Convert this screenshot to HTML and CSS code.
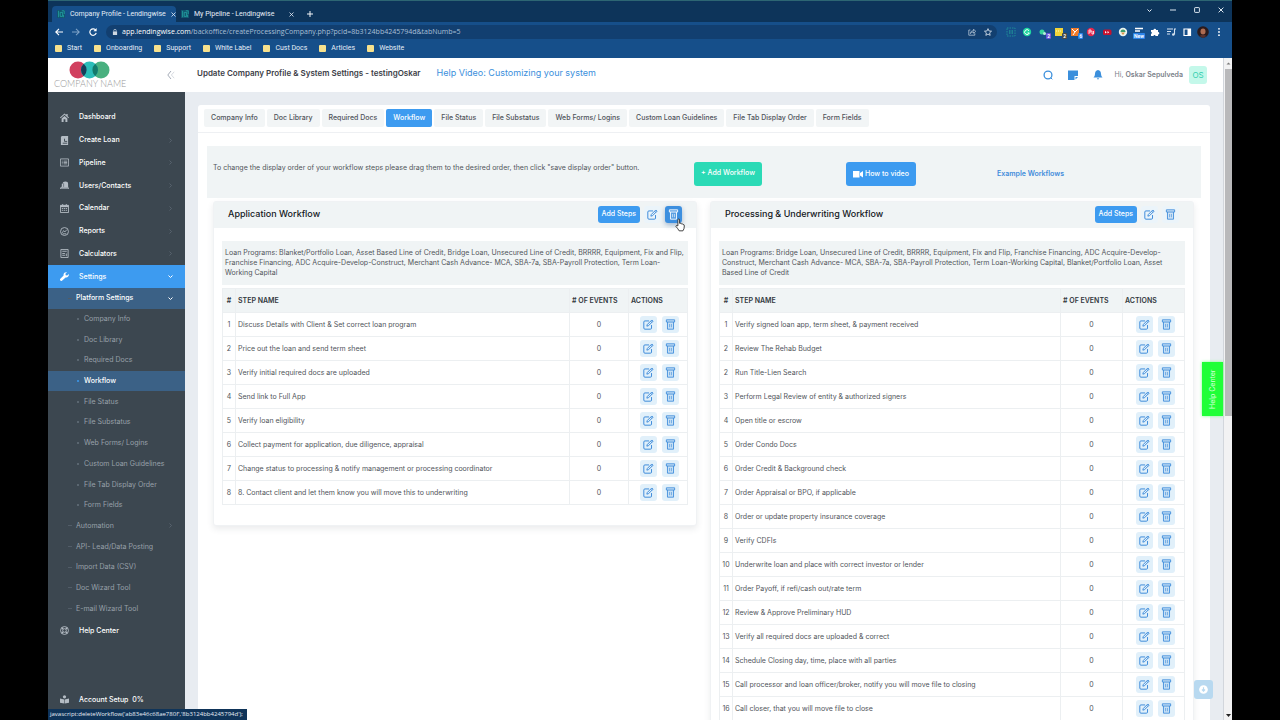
FILE: index.html
```html
<!DOCTYPE html>
<html lang="en">
<head>
<meta charset="utf-8">
<title>Company Profile - Lendingwise</title>
<link rel="stylesheet" href="styles.css">
</head>
<body>
<svg class="defs" aria-hidden="true">
  <symbol id="edit" viewBox="0 0 20 20"><path d="M11 3.5H3.5a2 2 0 0 0-2 2v11a2 2 0 0 0 2 2h10a2 2 0 0 0 2-2V11M16 1.800 18.200 4 10 12.200l-3 .8.8-3zM14 4l2 2" fill="none" stroke="currentColor" stroke-width="1.800"/></symbol>
  <symbol id="trash" viewBox="0 0 20 20"><path d="M2.500 5.500v-4h15v4zM4.500 5.500v13h11v-13" fill="currentColor" fill-opacity=".15" stroke="currentColor" stroke-width="1.600"/><path d="M8.300 9v6M11.700 9v6" stroke="currentColor" stroke-width="1.600" opacity=".7"/></symbol>
  <symbol id="right" viewBox="0 0 10 10"><path d="M3 1l4 4-4 4" fill="none" stroke="currentColor" stroke-width="1.500"/></symbol>
  <symbol id="down" viewBox="0 0 10 10"><path d="M1 3l4 4 4-4" fill="none" stroke="currentColor" stroke-width="2"/></symbol>
  <symbol id="close" viewBox="0 0 10 10"><path d="M1 1l8 8M9 1L1 9" fill="none" stroke="currentColor" stroke-width="1.600"/></symbol>
  <symbol id="favicon" viewBox="0 0 10 10"><path d="M0 0h10v10H0z" fill="#12556f"/><path d="M2 1v8M4 3h3v5H4zM6 1h3v4M8 6v3" fill="none" stroke="#23a6a4"/></symbol>
</svg>

<div class="browser">
  <div class="tabstrip">
    <div class="btab btab-active"><svg class="i8"><use href="#favicon"/></svg><span>Company Profile - Lendingwise</span><button class="plain" aria-label="Close tab"><svg class="i5"><use href="#close"/></svg></button></div>
    <div class="btab"><svg class="i8"><use href="#favicon"/></svg><span>My Pipeline - Lendingwise</span><button class="plain" aria-label="Close tab"><svg class="i5"><use href="#close"/></svg></button></div>
    <button class="plain newtab" aria-label="New tab"><svg class="i6" viewBox="0 0 10 10"><path d="M5 0v10M0 5h10" stroke="#fff" stroke-width="1.600"/></svg></button>
    <div class="winctl">
      <button class="plain" aria-label="Search tabs"><svg class="i5"><use href="#down"/></svg></button>
      <button class="plain" aria-label="Minimize"><svg class="i6" viewBox="0 0 10 10"><path d="M0 5h10" stroke="currentColor" stroke-width="1.600"/></svg></button>
      <button class="plain" aria-label="Maximize"><svg class="i6" viewBox="0 0 10 10"><rect x="1" y="1" width="8" height="8" rx="1" fill="none" stroke="currentColor" stroke-width="1.600"/></svg></button>
      <button class="plain" aria-label="Close window"><svg class="i6"><use href="#close"/></svg></button>
    </div>
  </div>
  <div class="toolbar">
    <button class="plain" aria-label="Back"><svg class="i8" viewBox="0 0 10 10"><path d="M10 5H1M5 1L1 5l4 4" fill="none" stroke="#fff" stroke-width="1.400"/></svg></button>
    <button class="plain" aria-label="Forward"><svg class="i8" viewBox="0 0 10 10"><path d="M0 5h9M5 1l4 4-4 4" fill="none" stroke="#7fa3c8" stroke-width="1.300"/></svg></button>
    <button class="plain" aria-label="Reload"><svg class="i8" viewBox="0 0 10 10"><path d="M8.500 3A4 4 0 1 0 9 6" fill="none" stroke="#fff" stroke-width="1.500"/><path d="M9.500 0v4h-4z" fill="#fff"/></svg></button>
    <div class="omnibox">
      <svg class="i6" viewBox="0 0 10 10"><path d="M1.500 4h7v6h-7z" fill="#cfd8e2"/><path d="M3 4V2.500a2 2 0 0 1 4 0V4" fill="none" stroke="#cfd8e2" stroke-width="1.200"/></svg>
      <span class="url"><b>app.lendingwise.com</b>/backoffice/createProcessingCompany.php?pcId=8b3124bb4245794d&amp;tabNumb=5</span>
      <svg class="i8" viewBox="0 0 10 10"><path d="M3 2.500H1V9h7.500V6.500M3 7c0-2.500 1.500-3.500 4-3.500V1.500L9.700 4.200 7 6.500v-1.500C5.500 5 4 5.500 3 7z" fill="none" stroke="#c4d2e0" stroke-width=".9"/></svg>
      <svg class="i8" viewBox="0 0 10 10"><path d="M5 .8l1.200 2.900 3.200.3-2.400 2.100.7 3.100L5 7.600 2.300 9.200 3 6.100.6 4l3.200-.3z" fill="none" stroke="#e2eaf2"/></svg>
    </div>
    <div class="exts">
      <svg class="i10" viewBox="0 0 10 10"><rect x="1" y="1" width="8" height="8" fill="none" stroke="#1f8b96" stroke-dasharray="1.500 1"/><path d="M3.500 3v4M5 3v4M6.500 3v4" stroke="#1f8b96" stroke-width=".8"/></svg>
      <svg class="i10" viewBox="0 0 10 10"><circle cx="5" cy="5" r="4.200" fill="#1fd6a0"/><path d="M7 3.700A2.400 2.400 0 1 0 7.300 6H5.500" fill="none" stroke="#fff"/></svg>
      <span class="ext"><svg class="i10" viewBox="0 0 10 10"><circle cx="4" cy="5" r="2.500" fill="#38d39b"/><circle cx="6.500" cy="6.500" r="1.500" fill="#b8efd8"/></svg><i class="bdg violet">2</i></span>
      <span class="ext"><svg class="i10" viewBox="0 0 10 10"><path d="M1 1h8v8H1z" fill="#f1d438"/><path d="M2 4h6" stroke="#fff8c8" stroke-dasharray="1 1"/></svg><i class="bdg dark">2</i></span>
      <span class="ext"><svg class="i10" viewBox="0 0 10 10"><path d="M1 1h8v8H1z" fill="#f07c2c"/><path d="M2 2l3 3 3-3M5 5L3 8" fill="none" stroke="#fff"/></svg><i class="bdg sky">6</i></span>
      <svg class="i10" viewBox="0 0 10 10"><circle cx="5" cy="5" r="4.200" fill="#e3264d"/><path d="M3 7V3h2v2H3M6 4v3h1.500V4" fill="none" stroke="#fff" stroke-width=".8"/></svg>
      <svg class="i10" viewBox="0 0 10 10"><rect x="1" y="2.500" width="8.500" height="5.500" rx="1.500" fill="#c5122f"/><path d="M3 4l1.700 1.200L3 6.500zM5.500 4l1.700 1.200-1.700 1.300z" fill="#fff"/></svg>
      <svg class="i10" viewBox="0 0 10 10"><circle cx="5" cy="5" r="4.200" fill="#e9f2ef"/><path d="M2.500 5a2.500 2.500 0 0 1 5 0z" fill="#3d9d6c"/><path d="M3 5.500h4L5 8z" fill="#dd9340"/></svg>
      <span class="ext"><svg class="i10" viewBox="0 0 10 10"><path d="M1 1.500h8M1 4h5" stroke="#fff" stroke-width="1.500"/></svg><i class="bdg sky wide">New</i></span>
      <svg class="i10" viewBox="0 0 10 10"><path d="M1 3h2.500a1.300 1.300 0 1 1 2.600 0H8v2a1.300 1.300 0 1 1 0 2.600V9H5.500a1 1 0 0 0-2 0H1V7a1.200 1.200 0 0 0 0-2.300z" fill="#fff"/></svg>
      <svg class="i10" viewBox="0 0 10 10"><path d="M1 2h6M1 4.500h4M1 7h3M8.500 2v5.500M8 2h2" stroke="#d5e2ef" stroke-width="1.100"/><circle cx="7.300" cy="7.500" r="1.300" fill="#d5e2ef"/></svg>
      <svg class="i10" viewBox="0 0 10 10"><path d="M2 2h6.500v6.500H2z" fill="none" stroke="#fff" stroke-width="1.200"/><path d="M5.500 2h3v6.500h-3z" fill="#fff"/></svg>
      <svg class="i12" viewBox="0 0 12 12"><circle cx="6" cy="6" r="5.800" fill="#2a1a1c"/><ellipse cx="6" cy="5.500" rx="2.500" ry="3" fill="#ae6c52"/><path d="M2.500 10q3.500-3 7 0l-3.500 2z" fill="#54302f"/></svg>
      <svg class="i10" viewBox="0 0 10 10"><circle cx="5" cy="1.800" r=".9" fill="#fff"/><circle cx="5" cy="5" r=".9" fill="#fff"/><circle cx="5" cy="8.200" r=".9" fill="#fff"/></svg>
    </div>
  </div>
  <div class="bookmarks">
    <a href="#">Start</a><a href="#">Onboarding</a><a href="#">Support</a><a href="#">White Label</a><a href="#">Cust Docs</a><a href="#">Articles</a><a href="#">Website</a>
  </div>
</div>

<div class="app">
  <aside class="side">
    <div class="brand">
      <div class="logo">
        <svg class="circles" viewBox="0 0 42 18"><circle cx="9" cy="9" r="8.500" fill="#d1405f"/><circle cx="32" cy="9" r="8.500" fill="#49b07f"/><circle cx="20.500" cy="9" r="8.500" fill="#2cbdb9"/><path d="M14.800 2.700a8.500 8.500 0 0 1 0 12.600 8.500 8.500 0 0 1 0-12.600z" fill="#173f5a"/><path d="M26.200 2.700a8.500 8.500 0 0 1 0 12.600 8.500 8.500 0 0 1 0-12.600z" fill="#147a6b"/></svg>
        <span>COMPANY NAME</span>
      </div>
      <button class="plain" aria-label="Collapse menu"><svg class="i8" viewBox="0 0 10 10"><path d="M5 0L1 5l4 5" fill="none" stroke="#8d95a5"/><path d="M9 1L5.500 5 9 9" fill="none" stroke="#ccd0d8"/></svg></button>
    </div>
    <nav class="menu">
      <div class="top">
        <a href="#"><svg class="i9" viewBox="0 0 10 10"><path d="M0 5l5-4.500 2 1.800V1h1.500v2.500L10 5l-.7.800L5 2 .7 5.800zM1.800 6L5 3.200 8.200 6v4H6V7H4v3H1.800z" fill="currentColor"/></svg><span>Dashboard</span></a>
        <a href="#"><svg class="i9" viewBox="0 0 10 10"><path d="M2 0h7v10H1V1z" fill="currentColor"/><path d="M5 3v3h3M3 8h5" fill="none" stroke="#3c4750"/></svg><span>Create Loan</span><svg class="i5 arr"><use href="#right"/></svg></a>
        <a href="#"><svg class="i9" viewBox="0 0 10 10"><path d="M.5 1h9v8h-9zM2 3.500h1M4 3.500h4M2 5h1M4 5h4M2 6.500h1M4 6.500h4" fill="none" stroke="currentColor" stroke-width=".9"/></svg><span>Pipeline</span><svg class="i5 arr"><use href="#right"/></svg></a>
        <a href="#"><svg class="i9" viewBox="0 0 10 10"><path d="M3 3q0-2.500 3-2.500T9 3v3l1 3H0q0-2 2-3V3z" fill="currentColor"/><path d="M4 2.500v4M1 8h8" stroke="#3c4750" stroke-width=".6"/></svg><span>Users/Contacts</span><svg class="i5 arr"><use href="#right"/></svg></a>
        <a href="#"><svg class="i9" viewBox="0 0 10 10"><path d="M.5 1.500h9v8h-9z" fill="none" stroke="currentColor"/><path d="M.5 2.500h9M2 5h6M2 7h6M3 0v2M7 0v2" stroke="currentColor" stroke-dasharray="1.500 .7"/><path d="M.5 2.500h9" stroke="currentColor" stroke-width="2"/></svg><span>Calendar</span><svg class="i5 arr"><use href="#right"/></svg></a>
        <a href="#"><svg class="i9" viewBox="0 0 10 10"><circle cx="5" cy="5" r="4.400" fill="none" stroke="currentColor"/><path d="M2.500 6.500L4 4l1.500 1.500L7.500 3M3 7.500h4" fill="none" stroke="currentColor" stroke-width=".9"/></svg><span>Reports</span><svg class="i5 arr"><use href="#right"/></svg></a>
        <a href="#"><svg class="i9" viewBox="0 0 10 10"><path d="M1 .5h8v9H1zM2.500 2.500h5M2.500 5h3M2.500 7h3M7 5v3" fill="none" stroke="currentColor"/></svg><span>Calculators</span><svg class="i5 arr"><use href="#right"/></svg></a>
        <a href="#" class="current"><svg class="i9" viewBox="0 0 10 10"><path d="M9.700 2.200L8 4 6.300 3.700 6 2 7.800.3A3 3 0 0 0 4 3.800L.4 7.400a1.400 1.400 0 0 0 2.100 2.100L6.200 6a3 3 0 0 0 3.500-3.800z" fill="currentColor"/></svg><span>Settings</span><svg class="i5 arr"><use href="#down"/></svg></a>
      </div>
      <div class="sub">
        <a href="#" class="l2 on"><span>Platform Settings</span><svg class="i5 arr"><use href="#down"/></svg></a>
        <a href="#" class="l3">Company Info</a>
        <a href="#" class="l3">Doc Library</a>
        <a href="#" class="l3">Required Docs</a>
        <a href="#" class="l3 on">Workflow</a>
        <a href="#" class="l3">File Status</a>
        <a href="#" class="l3">File Substatus</a>
        <a href="#" class="l3">Web Forms/ Logins</a>
        <a href="#" class="l3">Custom Loan Guidelines</a>
        <a href="#" class="l3">File Tab Display Order</a>
        <a href="#" class="l3">Form Fields</a>
        <a href="#" class="l2"><span>Automation</span><svg class="i5 arr"><use href="#right"/></svg></a>
        <a href="#" class="l2">API- Lead/Data Posting</a>
        <a href="#" class="l2">Import Data (CSV)</a>
        <a href="#" class="l2">Doc Wizard Tool</a>
        <a href="#" class="l2">E-mail Wizard Tool</a>
      </div>
      <a href="#" class="single"><svg class="i9" viewBox="0 0 10 10"><circle cx="5" cy="5" r="4.400" fill="none" stroke="currentColor"/><circle cx="5" cy="5" r="2" fill="none" stroke="currentColor"/><path d="M2 2l1.500 1.500M8 2L6.500 3.500M2 8l1.500-1.500M8 8L6.500 6.500" stroke="currentColor" stroke-width="1.400"/></svg><span>Help Center</span></a>
      <a href="#" class="single last"><svg class="i9" viewBox="0 0 10 10"><circle cx="5" cy="2" r="1.800" fill="currentColor"/><path d="M0 4l4.700 1v4.500L0 8.500zM10 4L5.300 5v4.500l4.700-1z" fill="currentColor"/></svg><span>Account Setup&nbsp; 0%</span></a>
    </nav>
  </aside>

  <div class="page">
    <header class="head">
      <h1>Update Company Profile &amp; System Settings - testingOskar</h1>
      <a href="#" class="helpvid">Help Video: Customizing your system</a>
      <div class="user">
        <button class="plain" aria-label="Search"><svg class="i10" viewBox="0 0 10 10"><circle cx="5" cy="5" r="3.900" fill="none" stroke="currentColor" stroke-width="1.300"/><path d="M7.700 7.700L9.300 9.300" stroke="currentColor"/></svg></button>
        <button class="plain" aria-label="Notes"><svg class="i10" viewBox="0 0 10 10"><path d="M0 .5h10V6H6.500v4H0z" fill="currentColor"/><path d="M7.500 7H10L7.500 9.500z" fill="currentColor"/></svg></button>
        <button class="plain" aria-label="Notifications"><svg class="i10" viewBox="0 0 10 10"><path d="M5 0q3 .5 3 4 0 2 1.500 3.500h-9Q2 6 2 4 2 .5 5 0zM3.800 8.200h2.400L5 9.700z" fill="currentColor"/></svg></button>
        <span class="hi">Hi, <b>Oskar Sepulveda</b></span>
        <span class="avatar">OS</span>
      </div>
    </header>

    <main class="main">
      <div class="card">
        <nav class="tabs">
          <a href="#">Company Info</a><a href="#">Doc Library</a><a href="#">Required Docs</a><a href="#" class="sel">Workflow</a><a href="#">File Status</a><a href="#">File Substatus</a><a href="#">Web Forms/ Logins</a><a href="#">Custom Loan Guidelines</a><a href="#">File Tab Display Order</a><a href="#">Form Fields</a>
        </nav>
        <div class="content">
          <div class="notice">
            <p>To change the display order of your workflow steps please drag them to the desired order, then click "save display order" button.</p>
            <div><button class="btn green">+ Add Workflow</button></div>
            <div><button class="btn blue big"><svg class="i10" viewBox="0 0 10 10"><path d="M0 2h6.500v6.500H0zM7 4l3-2v6.500L7 6.500z" fill="#fff"/></svg>How to video</button></div>
            <a href="#">Example Workflows</a>
          </div>
          <div class="panels">
            <section class="panel">
              <div class="phead">
                <h2>Application Workflow</h2>
                <button class="btn blue">Add Steps</button>
                <button class="act" aria-label="Edit workflow"><svg><use href="#edit"/></svg></button>
                <button class="act hover" aria-label="Delete workflow"><svg><use href="#trash"/></svg><svg class="cursor" viewBox="0 0 12 16"><path d="M3.500 9V2q0-1.200 1-1.200t1 1.200v4q2-.5 2.500.7 1.500-.4 1.800.8 1.500-.2 1.400 1.500 0 4-1.700 6H5Q3.500 12.500 1 9.500q0-1.500 2.500-.5z" fill="#fff" stroke="#222"/></svg></button>
              </div>
              <div class="pbody">
                <p class="programs">Loan Programs: Blanket/Portfolio Loan, Asset Based Line of Credit, Bridge Loan, Unsecured Line of Credit, BRRRR, Equipment, Fix and Flip, Franchise Financing, ADC Acquire-Develop-Construct, Merchant Cash Advance- MCA, SBA-7a, SBA-Payroll Protection, Term Loan-Working Capital</p>
                <table>
                  <thead><tr><th class="n">#</th><th>STEP NAME</th><th class="e"># OF EVENTS</th><th class="a">ACTIONS</th></tr></thead>
                  <tbody>
                  <tr><td>1</td><td>Discuss Details with Client &amp; Set correct loan program</td><td>0</td><td><button class="act" aria-label="Edit"><svg><use href="#edit"/></svg></button><button class="act" aria-label="Delete"><svg><use href="#trash"/></svg></button></td></tr>
                  <tr><td>2</td><td>Price out the loan and send term sheet</td><td>0</td><td><button class="act" aria-label="Edit"><svg><use href="#edit"/></svg></button><button class="act" aria-label="Delete"><svg><use href="#trash"/></svg></button></td></tr>
                  <tr><td>3</td><td>Verify initial required docs are uploaded</td><td>0</td><td><button class="act" aria-label="Edit"><svg><use href="#edit"/></svg></button><button class="act" aria-label="Delete"><svg><use href="#trash"/></svg></button></td></tr>
                  <tr><td>4</td><td>Send link to Full App</td><td>0</td><td><button class="act" aria-label="Edit"><svg><use href="#edit"/></svg></button><button class="act" aria-label="Delete"><svg><use href="#trash"/></svg></button></td></tr>
                  <tr><td>5</td><td>Verify loan eligibility</td><td>0</td><td><button class="act" aria-label="Edit"><svg><use href="#edit"/></svg></button><button class="act" aria-label="Delete"><svg><use href="#trash"/></svg></button></td></tr>
                  <tr><td>6</td><td>Collect payment for application, due diligence, appraisal</td><td>0</td><td><button class="act" aria-label="Edit"><svg><use href="#edit"/></svg></button><button class="act" aria-label="Delete"><svg><use href="#trash"/></svg></button></td></tr>
                  <tr><td>7</td><td>Change status to processing &amp; notify management or processing coordinator</td><td>0</td><td><button class="act" aria-label="Edit"><svg><use href="#edit"/></svg></button><button class="act" aria-label="Delete"><svg><use href="#trash"/></svg></button></td></tr>
                  <tr><td>8</td><td>8. Contact client and let them know you will move this to underwriting</td><td>0</td><td><button class="act" aria-label="Edit"><svg><use href="#edit"/></svg></button><button class="act" aria-label="Delete"><svg><use href="#trash"/></svg></button></td></tr>
                  </tbody>
                </table>
              </div>
            </section>
            <section class="panel roomy">
              <div class="phead">
                <h2>Processing &amp; Underwriting Workflow</h2>
                <button class="btn blue">Add Steps</button>
                <button class="act" aria-label="Edit workflow"><svg><use href="#edit"/></svg></button>
                <button class="act" aria-label="Delete workflow"><svg><use href="#trash"/></svg></button>
              </div>
              <div class="pbody">
                <p class="programs">Loan Programs: Bridge Loan, Unsecured Line of Credit, BRRRR, Equipment, Fix and Flip, Franchise Financing, ADC Acquire-Develop-Construct, Merchant Cash Advance- MCA, SBA-7a, SBA-Payroll Protection, Term Loan-Working Capital, Blanket/Portfolio Loan, Asset Based Line of Credit</p>
                <table>
                  <thead><tr><th class="n">#</th><th>STEP NAME</th><th class="e"># OF EVENTS</th><th class="a">ACTIONS</th></tr></thead>
                  <tbody>
                  <tr><td>1</td><td>Verify signed loan app, term sheet, &amp; payment received</td><td>0</td><td><button class="act" aria-label="Edit"><svg><use href="#edit"/></svg></button><button class="act" aria-label="Delete"><svg><use href="#trash"/></svg></button></td></tr>
                  <tr><td>2</td><td>Review The Rehab Budget</td><td>0</td><td><button class="act" aria-label="Edit"><svg><use href="#edit"/></svg></button><button class="act" aria-label="Delete"><svg><use href="#trash"/></svg></button></td></tr>
                  <tr><td>2</td><td>Run Title-Lien Search</td><td>0</td><td><button class="act" aria-label="Edit"><svg><use href="#edit"/></svg></button><button class="act" aria-label="Delete"><svg><use href="#trash"/></svg></button></td></tr>
                  <tr><td>3</td><td>Perform Legal Review of entity &amp; authorized signers</td><td>0</td><td><button class="act" aria-label="Edit"><svg><use href="#edit"/></svg></button><button class="act" aria-label="Delete"><svg><use href="#trash"/></svg></button></td></tr>
                  <tr><td>4</td><td>Open title or escrow</td><td>0</td><td><button class="act" aria-label="Edit"><svg><use href="#edit"/></svg></button><button class="act" aria-label="Delete"><svg><use href="#trash"/></svg></button></td></tr>
                  <tr><td>5</td><td>Order Condo Docs</td><td>0</td><td><button class="act" aria-label="Edit"><svg><use href="#edit"/></svg></button><button class="act" aria-label="Delete"><svg><use href="#trash"/></svg></button></td></tr>
                  <tr><td>6</td><td>Order Credit &amp; Background check</td><td>0</td><td><button class="act" aria-label="Edit"><svg><use href="#edit"/></svg></button><button class="act" aria-label="Delete"><svg><use href="#trash"/></svg></button></td></tr>
                  <tr><td>7</td><td>Order Appraisal or BPO, if applicable</td><td>0</td><td><button class="act" aria-label="Edit"><svg><use href="#edit"/></svg></button><button class="act" aria-label="Delete"><svg><use href="#trash"/></svg></button></td></tr>
                  <tr><td>8</td><td>Order or update property insurance coverage</td><td>0</td><td><button class="act" aria-label="Edit"><svg><use href="#edit"/></svg></button><button class="act" aria-label="Delete"><svg><use href="#trash"/></svg></button></td></tr>
                  <tr><td>9</td><td>Verify CDFIs</td><td>0</td><td><button class="act" aria-label="Edit"><svg><use href="#edit"/></svg></button><button class="act" aria-label="Delete"><svg><use href="#trash"/></svg></button></td></tr>
                  <tr><td>10</td><td>Underwrite loan and place with correct investor or lender</td><td>0</td><td><button class="act" aria-label="Edit"><svg><use href="#edit"/></svg></button><button class="act" aria-label="Delete"><svg><use href="#trash"/></svg></button></td></tr>
                  <tr><td>11</td><td>Order Payoff, if refi/cash out/rate term</td><td>0</td><td><button class="act" aria-label="Edit"><svg><use href="#edit"/></svg></button><button class="act" aria-label="Delete"><svg><use href="#trash"/></svg></button></td></tr>
                  <tr><td>12</td><td>Review &amp; Approve Preliminary HUD</td><td>0</td><td><button class="act" aria-label="Edit"><svg><use href="#edit"/></svg></button><button class="act" aria-label="Delete"><svg><use href="#trash"/></svg></button></td></tr>
                  <tr><td>13</td><td>Verify all required docs are uploaded &amp; correct</td><td>0</td><td><button class="act" aria-label="Edit"><svg><use href="#edit"/></svg></button><button class="act" aria-label="Delete"><svg><use href="#trash"/></svg></button></td></tr>
                  <tr><td>14</td><td>Schedule Closing day, time, place with all parties</td><td>0</td><td><button class="act" aria-label="Edit"><svg><use href="#edit"/></svg></button><button class="act" aria-label="Delete"><svg><use href="#trash"/></svg></button></td></tr>
                  <tr><td>15</td><td>Call processor and loan officer/broker, notify you will move file to closing</td><td>0</td><td><button class="act" aria-label="Edit"><svg><use href="#edit"/></svg></button><button class="act" aria-label="Delete"><svg><use href="#trash"/></svg></button></td></tr>
                  <tr><td>16</td><td>Call closer, that you will move file to close</td><td>0</td><td><button class="act" aria-label="Edit"><svg><use href="#edit"/></svg></button><button class="act" aria-label="Delete"><svg><use href="#trash"/></svg></button></td></tr>
                  </tbody>
                </table>
              </div>
            </section>
          </div>
        </div>
      </div>
    </main>
  </div>
  <div class="scroll">
    <svg class="i5" viewBox="0 0 10 10"><path d="M1 7l4-4 4 4z" fill="#777"/></svg>
    <div class="thumb"></div>
    <svg class="i5" viewBox="0 0 10 10"><path d="M0 2h10L5 8z" fill="#222"/></svg>
  </div>
  <button class="helptab">Help Center</button>
  <button class="jump" aria-label="Scroll down"><svg class="i9" viewBox="0 0 10 10"><circle cx="5" cy="5" r="4.800" fill="#fff"/><path d="M5 2.500v4M3.300 5L5 6.800 6.700 5" fill="none" stroke="#b8d9f0" stroke-width="1.300"/></svg></button>
  <div class="status">javascript:deleteWorkflow('ab83e46c68ae780f','8b3124bb4245794d');</div>
</div>
</body>
</html>
```

FILE: styles.css
```css
* { box-sizing: border-box; }
body {
  margin: 0;
  padding: 0 48px;
  height: 100vh;
  overflow: hidden;
  background: #000;
  display: flex;
  flex-direction: column;
  font: 7px/10px Inter, "Open Sans", sans-serif;
  color: #50545a;
}
a { color: inherit; text-decoration: none; }
button { font: inherit; border: 0; cursor: pointer; }
h1, h2, p { margin: 0; font-weight: 400; }
svg { display: block; flex: none; }
.defs { position: absolute; width: 0; height: 0; }
.plain { padding: 0; background: none; color: inherit; }
.i5 { width: 5px; height: 5px; }
.i6 { width: 6px; height: 6px; }
.i8 { width: 8px; height: 8px; }
.i9 { width: 9px; height: 9px; }
.i10 { width: 10px; height: 10px; }
.i12 { width: 12px; height: 12px; }

/* Browser chrome */
.browser { flex: none; background: #164f8a; color: #e6eef7; font-family: Roboto, sans-serif; }
.tabstrip { display: flex; align-items: center; height: 22px; padding: 5px 8px 0 4px; background: #0d345a; border-top: 1px solid #2d6673; }
.btab { display: flex; align-items: center; gap: 5px; width: 124px; height: 17px; padding: 0 6px 0 5px; border-radius: 4px 4px 0 0; }
.btab span { flex: 1; white-space: nowrap; }
.btab-active { background: #164f8a; }
.newtab { margin-left: 7px; }
.winctl { display: flex; gap: 18px; margin: 0 0 8px auto; }
.toolbar { display: flex; align-items: center; gap: 9px; height: 19px; padding: 0 6px 0 7px; }
.omnibox { flex: 1; display: flex; align-items: center; gap: 8px; height: 14px; padding: 0 5px 0 6px; border-radius: 7px; background: #123f70; color: #a9bfd6; }
.omnibox .i6 { margin-right: -4px; }
.url { flex: 1; white-space: nowrap; font-family: "Open Sans", sans-serif; }
.url b { font-weight: 400; color: #fff; }
.exts { display: flex; align-items: center; gap: 6px; width: 220px; }
.exts .i12 { margin: 0 -1px; }
.ext { position: relative; }
.bdg { position: absolute; right: -3px; bottom: -2px; padding: 0 1px; border-radius: 1px; font: 700 5px/6px Roboto, sans-serif; color: #fff; }
.violet { background: #6a4fd6; }
.dark { background: #4a4a42; }
.sky { background: #2b83e8; }
.wide { right: -1px; }
.bookmarks { display: flex; gap: 12px; height: 17px; padding: 0 7px 3px; align-items: center; }
.bookmarks a { display: flex; align-items: center; gap: 5px; }
.bookmarks a::before { content: ""; width: 7px; height: 7px; border-radius: 1px; background: #f7e18d; }

/* Application frame */
.app { position: relative; flex: 1; min-height: 0; display: flex; background: #e8ecf1; }
.side { width: 137px; flex: none; display: flex; flex-direction: column; background: #3c4750; }
.brand { display: flex; justify-content: space-between; align-items: center; height: 34px; padding: 0 10px 0 6px; background: #fff; }
.logo { display: flex; flex-direction: column; align-items: center; }
.logo span { font: 300 9px/10px Lato, sans-serif; color: #999; white-space: nowrap; }
.circles { width: 42px; height: 18px; }
.menu { flex: 1; display: flex; flex-direction: column; padding: 14px 0 9px; color: #fff; }
.menu a { display: flex; align-items: center; }
.top { display: grid; grid-auto-rows: 1fr; height: 182px; }
.top a, .single { gap: 10px; padding: 0 12px; font-weight: 500; }
.single { height: 23px; }
.last { margin-top: auto; }
.top svg, .single svg { color: #b4bcc4; }
.arr { margin-left: auto; }
.top .arr, .sub .arr { color: #5f6a75; }
.top .current { background: #3d9bf0; }
.top .current svg, .sub .on .arr { color: #fff; }
.sub { display: grid; grid-auto-rows: 1fr; height: 331px; color: #98a0a9; }
.l2 { padding: 0 12px 0 20px; }
.l3 { padding: 0 12px 0 29px; }
.l2::before { content: ""; width: 4px; height: 1px; margin-right: 4px; background: #515c67; }
.l3::before { content: ""; width: 2px; height: 2px; margin-right: 5px; border-radius: 1px; background: #65707b; }
.on { background: #3b6186; color: #fff; font-weight: 500; }
.l3.on::before { background: #3d9bf0; }

.page { flex: 1; min-width: 0; display: flex; flex-direction: column; }
.head { flex: none; display: flex; align-items: center; gap: 16px; height: 34px; padding: 0 16px 0 12px; background: #fff; }
.head h1, .helpvid { font-size: 8px; font-weight: 600; line-height: 12px; padding-bottom: 4px; white-space: nowrap; color: #3c4047; }
.head .helpvid { font-size: 9px; font-weight: 400; color: #3b8fdc; }
.user { margin-left: auto; display: flex; align-items: center; gap: 15px; color: #3b8fdc; }
.hi { color: #7b7f8a; margin-left: -3px; }
.hi b { font-weight: 600; }
.avatar { width: 18px; height: 18px; margin-left: -9px; border-radius: 3px; background: #c4f8ea; color: #33cfae; font-size: 8px; line-height: 18px; text-align: center; }

.main { flex: 1; min-height: 0; overflow: hidden; padding: 13px 13px 0; }
.card { background: #fff; border-radius: 3px; min-height: 100%; }
.tabs { display: flex; gap: 2px; padding: 4px 6px 5px; border-bottom: 1px solid #eef0f3; font-weight: 500; }
.tabs a { padding: 4px 7px; border-radius: 2px; background: #f2f5f6; white-space: nowrap; }
.tabs .sel { background: #3d9bf0; color: #fff; }
.content { padding: 13px 9px; }
.notice { display: grid; grid-template-columns: 487fr 152fr 151fr 204fr; align-items: center; height: 52px; margin-bottom: 3px; background: #f0f4f5; }
.notice p { padding: 0 0 9px 6px; white-space: nowrap; }
.notice div { padding-top: 4px; }
.notice > a { padding-top: 4px; color: #3f8cdb; font-weight: 600; }
.btn { height: 17px; padding: 0 4px; border-radius: 3px; color: #fff; font-weight: 500; white-space: nowrap; }
.blue { background: #3d9bf0; }
.notice .btn { display: flex; align-items: center; gap: 2px; height: 24px; padding: 0 7px; }
.green { background: #2bdab6; }
.notice .green { padding-bottom: 2px; }

.panels { display: grid; grid-template-columns: 1fr 1fr; gap: 13px; align-items: start; padding: 0 7px 0 6px; }
.panel { background: #fff; border: 1px solid #f0f2f4; border-radius: 3px; box-shadow: 0 3px 6px rgba(60, 70, 80, .1); }
.phead { display: flex; align-items: center; gap: 4px; height: 26px; padding: 0 14px 2px; background: #f0f4f5; }
.phead h2 { flex: 1; font-size: 9px; font-weight: 500; line-height: 12px; color: #14181c; }
.act { position: relative; width: 17px; height: 17px; padding: 3px; border-radius: 3px; background: #e1f0fa; color: #3f8cdb; }
.act > svg { width: 11px; height: 11px; }
.phead .act { background: #ebf4fa; }
.phead .hover { background: #3d8fdf; color: #fff; box-shadow: 0 2px 5px rgba(40, 90, 150, .4); }
.act > .cursor { position: absolute; left: 10px; top: 12px; width: 10px; height: 14px; }
.pbody { padding: 13px 8px 20px; }
.programs { height: 44px; margin-bottom: 3px; padding: 7px 1px 0 3px; background: #f0f4f5; }
table { width: 100%; border-collapse: collapse; table-layout: fixed; }
th, td { height: 24px; padding: 0 2px; border: 1px solid #eceff1; font-weight: 400; text-align: left; white-space: nowrap; }
th { background: #f0f4f5; color: #33383e; font-weight: 600; }
.n { width: 13px; }
.e, .a { width: 59px; }
.roomy .e, .roomy .a { width: 62px; }
th:first-child, td:first-child, td:nth-child(3) { text-align: center; padding: 0; }
td:last-child { text-align: right; padding-right: 8px; }
.roomy td:last-child { padding-right: 9px; }
td .act { display: inline-block; vertical-align: middle; }
td .act + .act { margin-left: 5px; }

.scroll { width: 9px; display: flex; flex-direction: column; align-items: center; gap: 3px; padding: 3px 0 2px; background: #f2f2f3; border-left: 1px solid #d2d6dc; }
.thumb { width: 7px; height: 347px; margin-bottom: auto; background: #b9b9bb; }
.helptab { position: absolute; right: 9px; top: 304px; width: 21px; height: 54px; padding: 0; background: #1fff37; color: #d9ffd9; writing-mode: vertical-rl; rotate: 180deg; text-align: center; box-shadow: 0 0 3px #7dff8a; }
.jump { position: absolute; right: 19px; bottom: 21px; width: 19px; height: 19px; padding: 5px; border-radius: 3px; background: #b8d9f0; }
.status { position: absolute; left: 0; bottom: 0; padding: 0 4px 1px 2px; background: #0f3459; color: #e8eef5; font: 6px/10px "Open Sans", sans-serif; white-space: nowrap; }
```
